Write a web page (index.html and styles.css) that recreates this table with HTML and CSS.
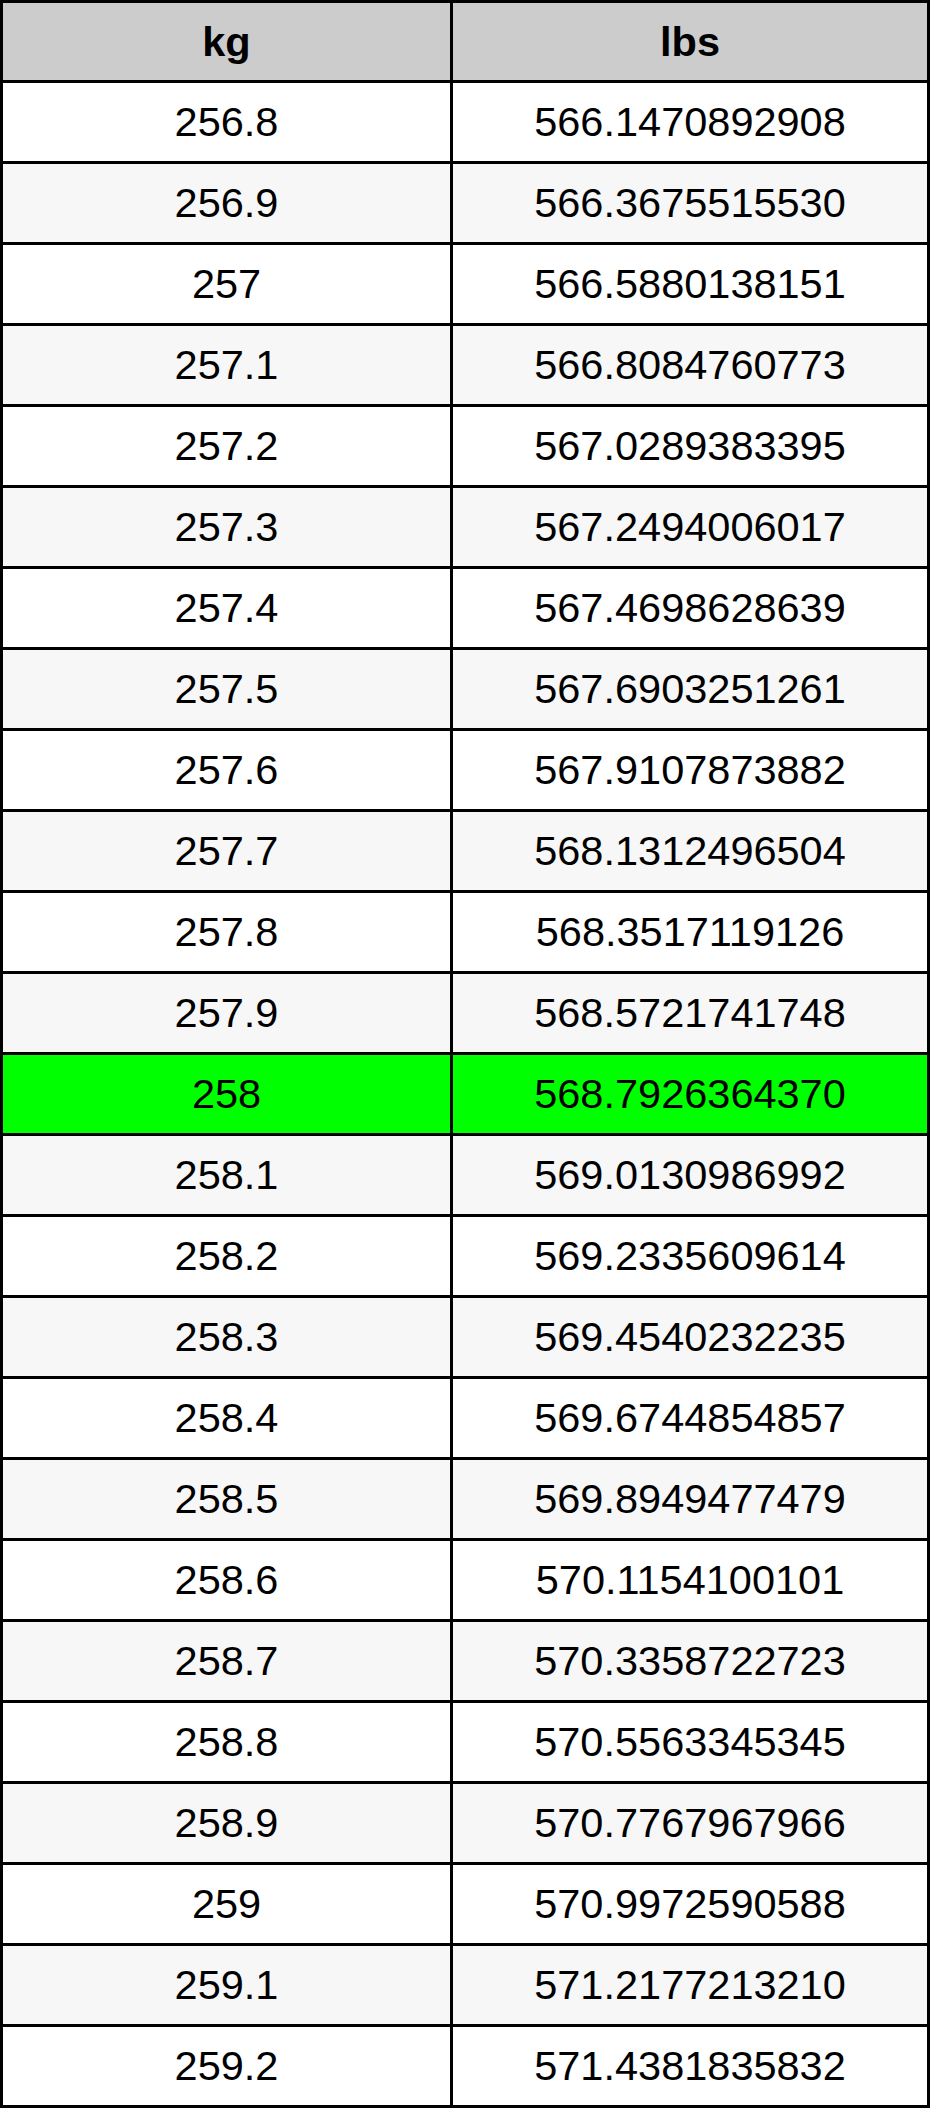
FILE: index.html
```html
<!DOCTYPE html>
<html>
<head>
<meta charset="utf-8">
<link rel="stylesheet" href="styles.css">
</head>
<body>
<table class="conv">
<thead>
<tr><th class="c1">kg</th><th class="c2">lbs</th></tr>
</thead>
<tbody>
<tr><td>256.8</td><td>566.1470892908</td></tr>
<tr class="alt"><td>256.9</td><td>566.3675515530</td></tr>
<tr><td>257</td><td>566.5880138151</td></tr>
<tr class="alt"><td>257.1</td><td>566.8084760773</td></tr>
<tr><td>257.2</td><td>567.0289383395</td></tr>
<tr class="alt"><td>257.3</td><td>567.2494006017</td></tr>
<tr><td>257.4</td><td>567.4698628639</td></tr>
<tr class="alt"><td>257.5</td><td>567.6903251261</td></tr>
<tr><td>257.6</td><td>567.9107873882</td></tr>
<tr class="alt"><td>257.7</td><td>568.1312496504</td></tr>
<tr><td>257.8</td><td>568.3517119126</td></tr>
<tr class="alt"><td>257.9</td><td>568.5721741748</td></tr>
<tr class="hl"><td>258</td><td>568.7926364370</td></tr>
<tr class="alt"><td>258.1</td><td>569.0130986992</td></tr>
<tr><td>258.2</td><td>569.2335609614</td></tr>
<tr class="alt"><td>258.3</td><td>569.4540232235</td></tr>
<tr><td>258.4</td><td>569.6744854857</td></tr>
<tr class="alt"><td>258.5</td><td>569.8949477479</td></tr>
<tr><td>258.6</td><td>570.1154100101</td></tr>
<tr class="alt"><td>258.7</td><td>570.3358722723</td></tr>
<tr><td>258.8</td><td>570.5563345345</td></tr>
<tr class="alt"><td>258.9</td><td>570.7767967966</td></tr>
<tr><td>259</td><td>570.9972590588</td></tr>
<tr class="alt"><td>259.1</td><td>571.2177213210</td></tr>
<tr><td>259.2</td><td>571.4381835832</td></tr>
</tbody>
</table>
</body>
</html>
```

FILE: styles.css
```css
html, body {
  margin: 0;
  padding: 0;
  background: #ffffff;
}

.conv {
  width: 930px;
  table-layout: fixed;
  border-collapse: separate;
  border-spacing: 0;
  border-top: 3px solid #000;
  border-left: 3px solid #000;
  font-family: "Liberation Sans", Arial, sans-serif;
  font-size: 41.5px;
  color: #000;
}

.conv th,
.conv td {
  box-sizing: border-box;
  padding: 0;
  text-align: center;
  vertical-align: middle;
  border-right: 3px solid #000;
  border-bottom: 3px solid #000;
  white-space: nowrap;
}

.conv th {
  background: #cccccc;
  font-weight: bold;
  line-height: 77px;
}

.conv .c1 {
  width: 450px;
}

.conv td {
  line-height: 78px;
  background: #ffffff;
}

.conv tr.alt td {
  background: #f7f7f7;
}

.conv tr.hl td {
  background: #00ff00;
}
```
